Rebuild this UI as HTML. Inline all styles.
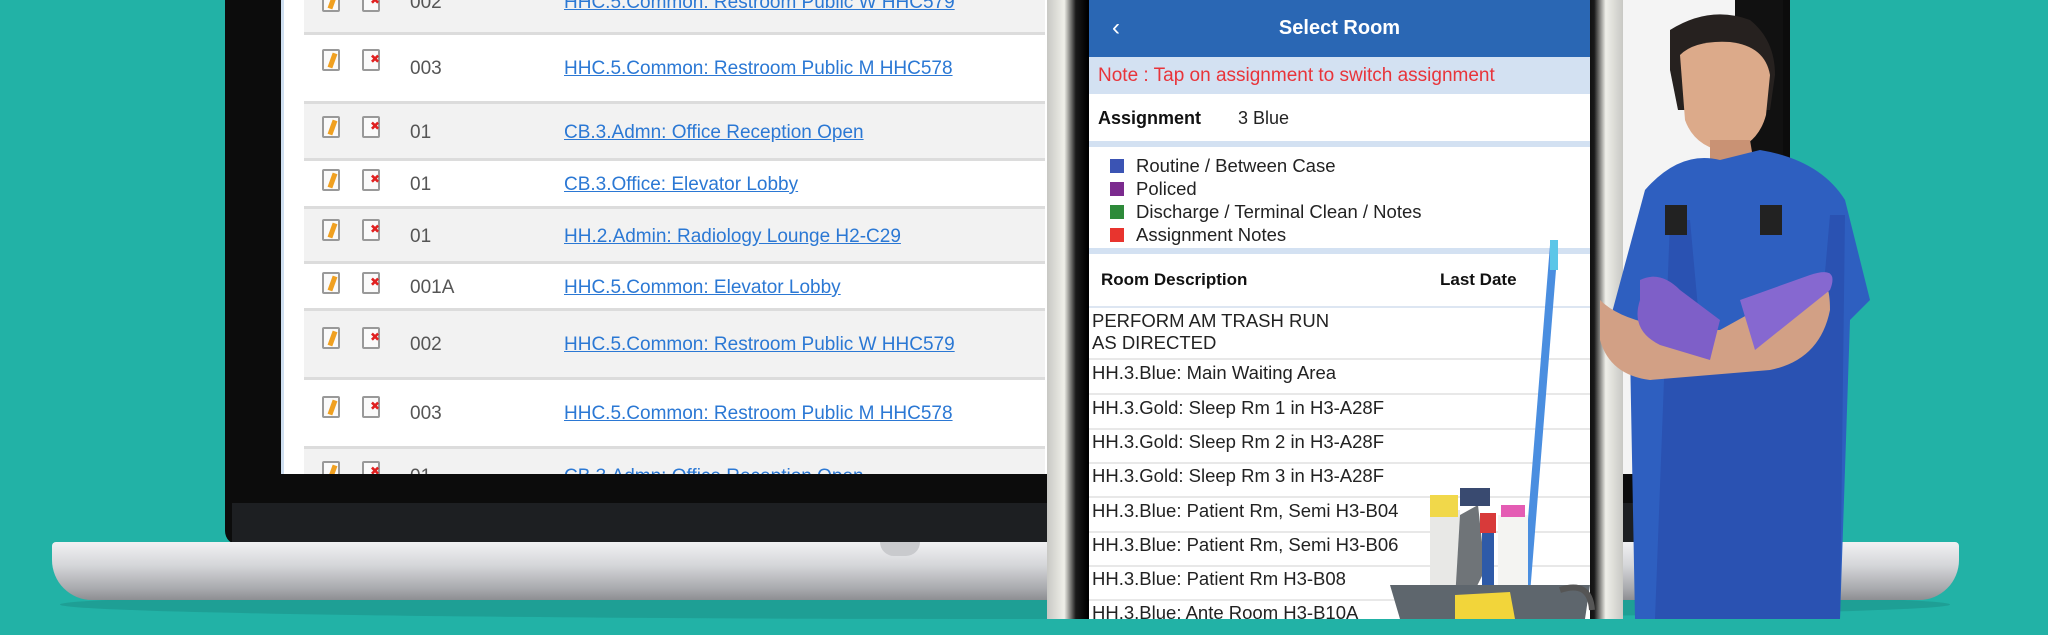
<!DOCTYPE html>
<html><head><meta charset="utf-8"><style>
*{margin:0;padding:0;box-sizing:border-box}
body{width:2048px;height:619px;overflow:hidden;background:#22b2a6;position:relative;font-family:"Liberation Sans",sans-serif}
.a{position:absolute}
.row{position:absolute;left:304px;width:741px;border-bottom:3px solid #dcdcdc}
.row span{position:absolute}
.code{left:106px;font-size:19px;color:#555}
.lnk{left:260px;font-size:19px;color:#2b78d4;text-decoration:underline}
.ic{width:18px;height:22px;border:2px solid #999;background:#fafafa;border-radius:2px}
.ic.e::after{content:"";position:absolute;left:6px;top:2px;width:5px;height:15px;background:#f0a020;transform:rotate(20deg)}
.ic.d::after{content:"✖";position:absolute;left:6px;top:1px;font-size:12px;color:#e02020}
.pr{position:absolute;left:1089px;width:501px;font-size:18.5px;color:#222;border-bottom:2px solid #e8e8e8;padding-left:3px}
.lg{position:absolute;left:1110px;width:14px;height:14px}
.lt{position:absolute;left:1136px;font-size:18.5px;color:#222}
</style></head><body>
<!-- laptop -->
<div class="a" style="left:60px;top:590px;width:1890px;height:29px;background:#1e9f95;border-radius:50%"></div>
<div class="a" style="left:225px;top:0;width:1565px;height:545px;background:#0c0c0c;border-radius:0 0 14px 14px"></div>
<div class="a" style="left:232px;top:503px;width:1550px;height:40px;background:#1d1f22"></div>
<div class="a" style="left:52px;top:542px;width:1907px;height:58px;background:linear-gradient(#f1f1f3,#d5d6d9 40%,#a9aaae 80%,#8d8e92);border-radius:4px 4px 40px 40px"></div>
<div class="a" style="left:880px;top:542px;width:40px;height:14px;background:#c9cacd;border-radius:0 0 14px 14px"></div>
<!-- screen left -->
<div class="a" style="left:281px;top:0;width:769px;height:474px;background:#fff;border-left:3px solid #cfdff0"></div>
<div class="row" style="top:0;height:35px;background:#f2f2f2"><span class="a ic e" style="left:18px;top:-10px"></span><span class="a ic d" style="left:58px;top:-10px"></span><span class="code" style="top:-8px">002</span><span class="lnk" style="top:-8px">HHC.5.Common: Restroom Public W HHC579</span></div>
<div class="row" style="top:35px;height:69px;background:#fff"><span class="a ic e" style="left:18px;top:14px"></span><span class="a ic d" style="left:58px;top:14px"></span><span class="code" style="top:23px">003</span><span class="lnk" style="top:23px">HHC.5.Common: Restroom Public M HHC578</span></div>
<div class="row" style="top:104px;height:57px;background:#f2f2f2"><span class="a ic e" style="left:18px;top:12px"></span><span class="a ic d" style="left:58px;top:12px"></span><span class="code" style="top:18px">01</span><span class="lnk" style="top:18px">CB.3.Admn: Office Reception Open</span></div>
<div class="row" style="top:161px;height:48px;background:#fff"><span class="a ic e" style="left:18px;top:8px"></span><span class="a ic d" style="left:58px;top:8px"></span><span class="code" style="top:13px">01</span><span class="lnk" style="top:13px">CB.3.Office: Elevator Lobby</span></div>
<div class="row" style="top:209px;height:55px;background:#f2f2f2"><span class="a ic e" style="left:18px;top:10px"></span><span class="a ic d" style="left:58px;top:10px"></span><span class="code" style="top:17px">01</span><span class="lnk" style="top:17px">HH.2.Admin: Radiology Lounge H2-C29</span></div>
<div class="row" style="top:264px;height:47px;background:#fff"><span class="a ic e" style="left:18px;top:8px"></span><span class="a ic d" style="left:58px;top:8px"></span><span class="code" style="top:13px">001A</span><span class="lnk" style="top:13px">HHC.5.Common: Elevator Lobby</span></div>
<div class="row" style="top:311px;height:69px;background:#f2f2f2"><span class="a ic e" style="left:18px;top:16px"></span><span class="a ic d" style="left:58px;top:16px"></span><span class="code" style="top:23px">002</span><span class="lnk" style="top:23px">HHC.5.Common: Restroom Public W HHC579</span></div>
<div class="row" style="top:380px;height:69px;background:#fff"><span class="a ic e" style="left:18px;top:16px"></span><span class="a ic d" style="left:58px;top:16px"></span><span class="code" style="top:23px">003</span><span class="lnk" style="top:23px">HHC.5.Common: Restroom Public M HHC578</span></div>
<div class="row" style="top:449px;height:25px;background:#f2f2f2;border:0;overflow:hidden"><span class="a ic e" style="left:18px;top:12px"></span><span class="a ic d" style="left:58px;top:12px"></span><span class="code" style="top:17px">01</span><span class="lnk" style="top:17px">CB.3.Admn: Office Reception Open</span></div>
<!-- right screen part -->
<div class="a" style="left:1620px;top:0;width:115px;height:474px;background:#f4f4f4"></div>
<div class="a" style="left:1735px;top:0;width:48px;height:474px;background:#111"></div>
<!-- phone -->
<div class="a" style="left:1047px;top:0;width:576px;height:619px;background:linear-gradient(90deg,#c8c8c4,#efefe9 3%,#1a1a1a 5%,#000 7%,#000 93%,#1a1a1a 95%,#efefe9 97%,#c8c8c4)"></div>
<div class="a" style="left:1089px;top:0;width:501px;height:619px;background:#fff"></div>
<div class="a" style="left:1089px;top:0;width:501px;height:57px;background:#2a67b4"></div>
<div class="a" style="left:1112px;top:14px;color:#fff;font-size:24px">‹</div>
<div class="a" style="left:1089px;top:17px;width:501px;text-align:center;color:#fff;font-size:20px;font-weight:bold">Select Room</div>
<div class="a" style="left:1089px;top:57px;width:501px;height:37px;background:#d3e1f2"></div>
<div class="a" style="left:1098px;top:65px;color:#e8343a;font-size:19px">Note : Tap on assignment to switch assignment</div>
<div class="a" style="left:1098px;top:108px;font-size:18px;font-weight:bold;color:#111">Assignment</div>
<div class="a" style="left:1238px;top:108px;font-size:18px;color:#222">3 Blue</div>
<div class="a" style="left:1089px;top:141px;width:501px;height:6px;background:#d3e1f2"></div>
<div class="lg" style="top:159px;background:#3b54b4"></div><div class="lt" style="top:155px">Routine / Between Case</div>
<div class="lg" style="top:182px;background:#7b2a8e"></div><div class="lt" style="top:178px">Policed</div>
<div class="lg" style="top:205px;background:#2e8a3a"></div><div class="lt" style="top:201px">Discharge / Terminal Clean / Notes</div>
<div class="lg" style="top:228px;background:#e8342e"></div><div class="lt" style="top:224px">Assignment Notes</div>
<div class="a" style="left:1089px;top:248px;width:501px;height:6px;background:#d3e1f2"></div>
<div class="a" style="left:1101px;top:270px;font-size:17px;font-weight:bold;color:#111">Room Description</div>
<div class="a" style="left:1440px;top:270px;font-size:17px;font-weight:bold;color:#111">Last Date</div>
<div class="a" style="left:1089px;top:306px;width:501px;height:2px;background:#dde6f2"></div>
<div class="pr" style="top:310px;height:50px;line-height:22px">PERFORM AM TRASH RUN<br>AS DIRECTED</div>
<div class="pr" style="top:362px;height:33px">HH.3.Blue: Main Waiting Area</div>
<div class="pr" style="top:397px;height:33px">HH.3.Gold: Sleep Rm 1 in H3-A28F</div>
<div class="pr" style="top:431px;height:33px">HH.3.Gold: Sleep Rm 2 in H3-A28F</div>
<div class="pr" style="top:465px;height:33px">HH.3.Gold: Sleep Rm 3 in H3-A28F</div>
<div class="pr" style="top:500px;height:33px">HH.3.Blue: Patient Rm, Semi H3-B04</div>
<div class="pr" style="top:534px;height:33px">HH.3.Blue: Patient Rm, Semi H3-B06</div>
<div class="pr" style="top:568px;height:33px">HH.3.Blue: Patient Rm H3-B08</div>
<div class="pr" style="top:602px;height:33px;border:0">HH.3.Blue: Ante Room H3-B10A</div>
<!-- bucket & mop -->
<svg class="a" style="left:1360px;top:240px" width="260" height="379">
<path d="M190 5 L198 5 L168 379 L160 379 Z" fill="#4a8ee0"/>
<rect x="190" y="0" width="8" height="30" fill="#5bc6e8"/>
<rect x="70" y="270" width="30" height="90" fill="#e8e8e6"/>
<rect x="70" y="255" width="28" height="22" fill="#f1d84a"/>
<path d="M100 275 L118 265 L125 330 L110 360 L95 360 Z" fill="#6f7478"/>
<rect x="100" y="248" width="30" height="18" fill="#394a70"/>
<rect x="122" y="290" width="12" height="70" fill="#2e5aa8"/>
<rect x="120" y="273" width="16" height="20" fill="#d83a3a"/>
<rect x="138" y="275" width="30" height="85" fill="#f4f4f2"/>
<rect x="141" y="265" width="24" height="12" fill="#e45cb4"/>
<path d="M30 345 L230 345 L225 379 L40 379 Z" fill="#5e666d"/>
<path d="M95 355 L150 352 L155 379 L95 379 Z" fill="#f2d53a"/>
<path d="M200 350 Q230 340 232 370" stroke="#555" stroke-width="6" fill="none"/>
</svg>
<!-- worker -->
<svg class="a" style="left:1570px;top:0" width="330" height="619">
<path d="M100 30 Q140 5 180 20 Q205 40 205 75 L200 110 L108 110 L100 70 Z" fill="#26211f"/>
<path d="M110 55 Q125 40 160 42 Q195 46 200 75 L196 115 Q188 145 158 152 Q125 148 115 120 Z" fill="#dcaa8a"/>
<path d="M140 140 L180 140 L185 170 L140 175 Z" fill="#c99274"/>
<path d="M75 190 Q110 150 150 160 L190 150 Q250 160 275 200 L300 300 L280 320 L270 619 L65 619 L60 350 L40 320 Z" fill="#2e5fc0"/>
<path d="M100 220 L120 220 L130 330 L250 330 L260 215 L275 215 L270 619 L85 619 Z" fill="#2a52b2"/>
<path d="M30 300 Q60 330 150 330 L240 280 Q260 270 260 310 Q250 360 200 370 L80 380 Q40 375 30 340 Z" fill="#d2a085"/>
<path d="M70 280 Q90 270 110 290 L150 320 L140 360 L90 345 Q60 330 70 300 Z" fill="#7e5fc8"/>
<path d="M170 300 L240 275 Q270 265 260 290 L235 310 L185 350 Z" fill="#8668d0"/>
<rect x="95" y="205" width="22" height="30" fill="#222"/>
<rect x="190" y="205" width="22" height="30" fill="#222"/>
</svg>
</body></html>
